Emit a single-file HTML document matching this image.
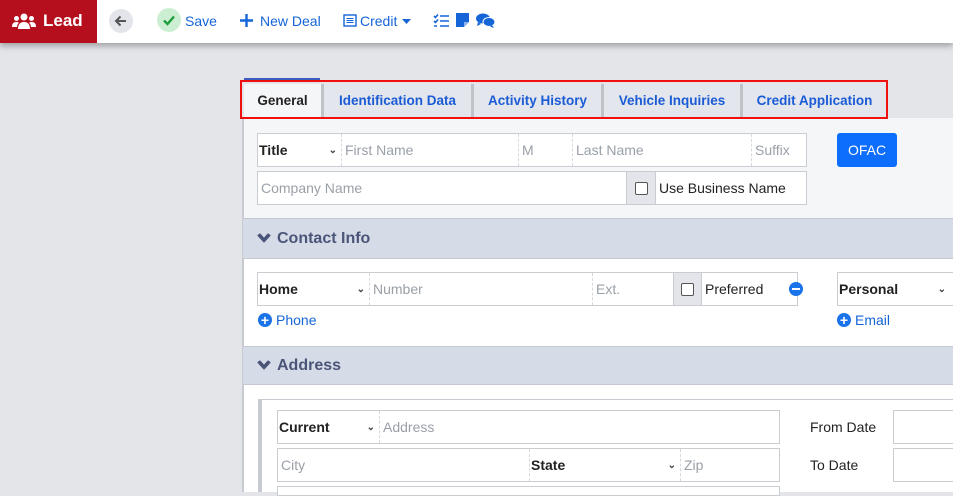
<!DOCTYPE html>
<html><head><style>
*{box-sizing:border-box;margin:0;padding:0}
body{width:953px;height:492px;overflow:hidden;background:#e3e5e9;font-family:"Liberation Sans",sans-serif;font-size:14px;position:relative}
.a{position:absolute}
.top{left:0;top:0;width:953px;height:43px;background:#fff;box-shadow:0 3px 6px rgba(0,0,0,.3)}
.lead{left:0;top:0;width:97px;height:43px;background:#b50e1d;color:#fff;font-weight:bold;font-size:17px}
.blue{color:#1565d8}
.f{border:1px solid #c9ccd1;background:#fff}
.c{position:absolute;top:0;height:100%;display:flex;align-items:center;padding-left:3px;color:#9aa0a8;border-left:1px dashed #d6d8dc}
.dk{color:#222}
.tab{position:absolute;top:84px;height:33px;background:#e3e6ec;color:#1a5bd6;font-weight:bold;font-size:13.5px;display:flex;align-items:center;justify-content:center;border-right:3px solid #bfc2c7}
.hdr{left:243px;width:710px;background:#d5dce8;color:#4a5578;font-weight:bold;font-size:16px;display:flex;align-items:center;padding-left:14px;border-top:1px solid #c3c8d1;border-bottom:1px solid #c3c8d1}
.hdr svg{margin-right:6px}
.cb{width:13px;height:13px;border:1.5px solid #555;border-radius:2px;background:#fff}
.arr{font-size:10px;color:#444;position:absolute;right:4px}
.sel{font-weight:bold;padding-left:1px}
</style></head><body>
<div class="a top"></div>
<div class="a lead"><svg class="a" style="left:12px;top:13px" width="24" height="17" viewBox="0 0 24 17"><circle cx="12" cy="4" r="3.5" fill="#fff"/><circle cx="4.5" cy="5.5" r="2.5" fill="#fff"/><circle cx="19.5" cy="5.5" r="2.5" fill="#fff"/><path d="M6 16c0-5 2.5-7 6-7s6 2 6 7z M0 14c0-4 2-5 4.5-5 1 0 2 .3 2.5.8C5.5 11 5 13 5 14z M24 14c0-4-2-5-4.5-5-1 0-2 .3-2.5.8 1.5 1.2 2 3.2 2 4.2z" fill="#fff"/></svg><span class="a" style="left:43px;top:11px">Lead</span></div>
<div class="a" style="left:109px;top:9px;width:24px;height:24px;border-radius:50%;background:#e3e5ea"></div>
<svg class="a" style="left:114px;top:14px" width="14" height="14" viewBox="0 0 14 14"><path d="M12 7H2M6.5 2.5L2 7l4.5 4.5" stroke="#555" stroke-width="2" fill="none"/></svg>
<div class="a" style="left:157px;top:8px;width:24px;height:24px;border-radius:50%;background:#ccefd3"></div>
<svg class="a" style="left:162px;top:13px" width="14" height="14" viewBox="0 0 14 14"><path d="M2 7.5l3.5 3.5L12 3.5" stroke="#1e9e3c" stroke-width="2.4" fill="none"/></svg>
<span class="a blue" style="left:185px;top:13px">Save</span>
<svg class="a" style="left:240px;top:14px" width="13" height="13" viewBox="0 0 13 13"><path d="M6.5 0v13M0 6.5h13" stroke="#1565d8" stroke-width="2.4"/></svg>
<span class="a blue" style="left:260px;top:13px">New Deal</span>
<svg class="a" style="left:343px;top:14px" width="14" height="13" viewBox="0 0 14 13"><rect x="1" y="1" width="12" height="11" fill="none" stroke="#1565d8" stroke-width="1.4"/><path d="M3.5 4.5h7M3.5 6.5h7M3.5 8.5h7" stroke="#1565d8"/></svg>
<span class="a blue" style="left:360px;top:13px">Credit</span>
<svg class="a" style="left:402px;top:19px" width="9" height="5" viewBox="0 0 9 5"><path d="M0 0h9L4.5 5z" fill="#1565d8"/></svg>
<svg class="a" style="left:433px;top:13px" width="16" height="15" viewBox="0 0 16 15"><path d="M1 3l1.5 1.5L5 1.5M1 8l1.5 1.5L5 6.5M1 13h3M7 3h9M7 8h9M7 13h9" stroke="#1565d8" stroke-width="1.6" fill="none"/></svg>
<svg class="a" style="left:456px;top:13px" width="13" height="14" viewBox="0 0 13 14"><path d="M0 0h13v9l-5 5H0z" fill="#1565d8"/><path d="M8 14V9h5" fill="#8ab4f0"/></svg>
<svg class="a" style="left:476px;top:13px" width="19" height="15" viewBox="0 0 19 15"><ellipse cx="7" cy="5.5" rx="7" ry="5" fill="#1565d8"/><path d="M2 9l-1 4 4-2z" fill="#1565d8"/><ellipse cx="13" cy="9" rx="6" ry="4.5" fill="#1565d8" stroke="#fff" stroke-width="1"/><path d="M16 12l2 3-4-1.5z" fill="#1565d8"/></svg>

<div class="a" style="left:242px;top:118px;width:711px;height:374px;background:#fff;border-left:2px solid #c7cad0"></div>
<div class="a" style="left:244px;top:118px;width:709px;height:100px;background:#f5f6f8"></div>
<div class="a" style="left:244px;top:78px;width:76px;height:3px;background:#3c5bc0"></div>
<div class="tab" style="left:244px;width:80px;background:#f5f6f8;color:#222">General</div>
<div class="tab" style="left:324px;width:150px">Identification Data</div>
<div class="tab" style="left:474px;width:130px">Activity History</div>
<div class="tab" style="left:604px;width:139px">Vehicle Inquiries</div>
<div class="tab" style="left:743px;width:143px;border-right:none">Credit Application</div>
<div class="a" style="left:240px;top:80px;width:648px;height:39px;border:2px solid #f01010"></div>

<div class="a f" style="left:257px;top:133px;width:550px;height:34px">
<div class="c dk sel" style="left:0;border:none;width:83px">Title<span class="arr">⌄</span></div>
<div class="c" style="left:83px">First Name</div>
<div class="c" style="left:260px">M</div>
<div class="c" style="left:314px">Last Name</div>
<div class="c" style="left:493px">Suffix</div></div>
<div class="a f" style="left:257px;top:171px;width:550px;height:34px">
<div class="c" style="left:0;border:none">Company Name</div>
<div class="c" style="left:368px;width:29px;background:#e3e5ea;border-left:1px solid #c9ccd1;justify-content:center;padding:0"><div class="cb"></div></div>
<div class="c dk" style="left:397px;border-left:1px solid #c9ccd1">Use Business Name</div></div>
<div class="a" style="left:837px;top:133px;width:60px;height:34px;background:#0d6efd;border-radius:3px;color:#fff;display:flex;align-items:center;justify-content:center">OFAC</div>

<div class="a hdr" style="top:218px;height:41px"><svg width="14" height="11" viewBox="0 0 14 11"><path d="M1 2.5L3 1l4 4.5L11 1l2 1.5L7 9z" fill="#4a5578" stroke="#4a5578" stroke-width="1.2" stroke-linejoin="round"/></svg>Contact Info</div>
<div class="a f" style="left:257px;top:272px;width:541px;height:34px">
<div class="c dk sel" style="left:0;border:none;width:111px">Home<span class="arr">⌄</span></div>
<div class="c" style="left:111px">Number</div>
<div class="c" style="left:334px">Ext.</div>
<div class="c" style="left:415px;width:28px;background:#e3e5ea;border-left:1px solid #c9ccd1;justify-content:center;padding:0"><div class="cb"></div></div>
<div class="c dk" style="left:443px;border-left:1px solid #c9ccd1">Preferred</div></div>
<div class="a" style="left:789px;top:282px;width:14px;height:14px;border-radius:50%;background:#1a73e8"><div class="a" style="left:3px;top:6px;width:8px;height:2px;background:#fff"></div></div>
<div class="a f" style="left:837px;top:272px;width:130px;height:34px"><div class="c dk sel" style="left:0;border:none;width:112px">Personal<span class="arr">⌄</span></div></div>
<div class="a" style="left:258px;top:313px;width:14px;height:14px;border-radius:50%;background:#1a73e8;color:#fff;font-weight:bold;font-size:14px;line-height:14px;text-align:center">+</div>
<span class="a blue" style="left:276px;top:312px">Phone</span>
<div class="a" style="left:837px;top:313px;width:14px;height:14px;border-radius:50%;background:#1a73e8;color:#fff;font-weight:bold;font-size:14px;line-height:14px;text-align:center">+</div>
<span class="a blue" style="left:855px;top:312px">Email</span>

<div class="a hdr" style="top:346px;height:39px"><svg width="14" height="11" viewBox="0 0 14 11"><path d="M1 2.5L3 1l4 4.5L11 1l2 1.5L7 9z" fill="#4a5578" stroke="#4a5578" stroke-width="1.2" stroke-linejoin="round"/></svg>Address</div>
<div class="a" style="left:258px;top:399px;width:695px;height:93px;border-left:4px solid #c7cad0;border-top:1px solid #c7cad0"></div>
<div class="a f" style="left:277px;top:410px;width:503px;height:34px">
<div class="c dk sel" style="left:0;border:none;width:101px">Current<span class="arr">⌄</span></div>
<div class="c" style="left:101px">Address</div></div>
<div class="a f" style="left:277px;top:448px;width:503px;height:34px">
<div class="c" style="left:0;border:none">City</div>
<div class="c dk sel" style="left:251px;width:151px">State<span class="arr">⌄</span></div>
<div class="c" style="left:402px">Zip</div></div>
<div class="a f" style="left:277px;top:486px;width:503px;height:10px"></div>
<span class="a" style="left:810px;top:419px;color:#222">From Date</span>
<span class="a" style="left:810px;top:457px;color:#222">To Date</span>
<div class="a f" style="left:893px;top:410px;width:70px;height:34px"></div>
<div class="a f" style="left:893px;top:448px;width:70px;height:34px"></div>
</body></html>
